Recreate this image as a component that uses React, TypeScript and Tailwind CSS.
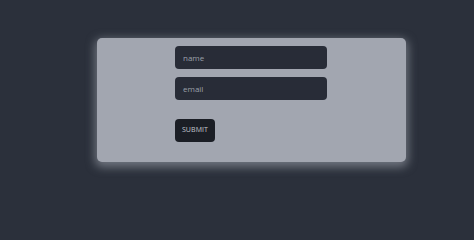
export default function App() {
  return (
    <div
      className="min-h-screen w-full bg-[#2b303b] pt-[38px] pl-[97px]"
      style={{ fontFamily: '"Open Sans", "Liberation Sans", sans-serif' }}
    >
      <form
        className="flex h-[124px] w-[309px] flex-col items-start rounded-[5px] bg-[#a2a6b0] pl-[78px] pt-[8px] shadow-[0_3px_10px_2px_rgba(170,174,184,0.55)]"
        onSubmit={e => e.preventDefault()}
      >
        <input
          type="text"
          placeholder="name"
          className="h-[23px] w-[152px] rounded-[4px] bg-[#282c37] px-[8px] text-[8px] text-[#c8ccd4] outline-none placeholder:text-[#9ca0aa]"
        />
        <input
          type="email"
          placeholder="email"
          className="mt-[8px] h-[23px] w-[152px] rounded-[4px] bg-[#282c37] px-[8px] text-[8px] text-[#c8ccd4] outline-none placeholder:text-[#9ca0aa]"
        />
        <button
          type="submit"
          className="mt-[19px] h-[23px] w-[40px] rounded-[4px] bg-[#1b1e25] text-[7px] font-medium uppercase tracking-[0.1px] text-[#c3c7cf]"
        >
          Submit
        </button>
      </form>
    </div>
  );
}
